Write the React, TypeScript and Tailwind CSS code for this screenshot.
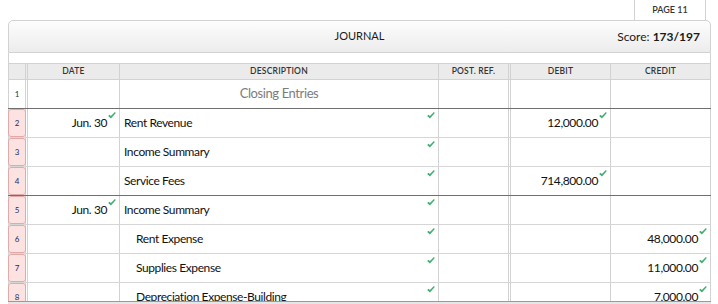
import React from 'react'

type Row = {
  n: number
  date?: string
  desc: string
  indent?: boolean
  debit?: string
  credit?: string
  checks: boolean
  title?: boolean
  dark?: boolean
}

const ROWS: Row[] = [
  { n: 1, desc: 'Closing Entries', title: true, checks: false, dark: true },
  { n: 2, date: 'Jun. 30', desc: 'Rent Revenue', debit: '12,000.00', checks: true },
  { n: 3, desc: 'Income Summary', checks: true },
  { n: 4, desc: 'Service Fees', debit: '714,800.00', checks: true, dark: true },
  { n: 5, date: 'Jun. 30', desc: 'Income Summary', checks: true },
  { n: 6, desc: 'Rent Expense', indent: true, credit: '48,000.00', checks: true },
  { n: 7, desc: 'Supplies Expense', indent: true, credit: '11,000.00', checks: true },
  { n: 8, desc: 'Depreciation Expense-Building', indent: true, credit: '7,000.00', checks: true },
]

const COLS = 'grid grid-cols-[17px_95px_319px_69px_103px_100px]'

function Check() {
  return (
    <svg width="8" height="7" viewBox="0 0 8 7" className="absolute top-[3px] right-[3px]">
      <path d="M0.2 3.9 L1.5 2.8 L2.9 4.1 L6.9 0.1 L7.8 0.9 L2.9 6.4 Z" fill="#3fae72" />
    </svg>
  )
}

function NumCell({ value, check }: { value?: string; check: boolean }) {
  return (
    <div className="relative flex items-center justify-end pr-[12px] text-[12px] tracking-[-0.4px] text-[#111]">
      {value}
      {value && check && <Check />}
    </div>
  )
}

export default function App() {
  return (
    <div className="w-[718px] h-[304px] bg-white overflow-hidden font-['Lato','Liberation_Sans',sans-serif] text-[#222]">
      {/* Page tab */}
      <div className="flex justify-end pr-[12px] h-[20px]">
        <div className="w-[72px] border-x border-[#d2d2d2] bg-white flex items-center justify-center text-[9px] font-semibold text-[#333]">
          PAGE 11
        </div>
      </div>

      {/* Header bar */}
      <div className="ml-[8px] w-[703px] h-[33px] border border-[#d2d2d2] rounded-t-[5px] bg-gradient-to-b from-[#fdfdfd] to-[#ececec] relative flex items-center justify-center">
        <span className="text-[11px] text-[#1a1a1a]">JOURNAL</span>
        <span className="absolute right-[10px] text-[12px] text-[#1a1a1a]">
          Score: <span className="font-bold">173/197</span>
        </span>
      </div>

      {/* Spacer strip */}
      <div className="ml-[8px] w-[703px] h-[10px] border-x border-[#d2d2d2] bg-white" />

      {/* Column headers */}
      <div className={`${COLS} ml-[8px] w-[703px] h-[17px] border-y border-[#d2d2d2] bg-[#ebebeb] text-[8.5px] font-semibold text-[#333] tracking-[0.2px]`}>
        <div className="border-l border-[#d2d2d2]" />
        <div className="border-l-[3px] border-double border-r border-[#d2d2d2] flex items-center justify-center">DATE</div>
        <div className="border-r border-[#d2d2d2] flex items-center justify-center">DESCRIPTION</div>
        <div className="flex items-center justify-center">POST. REF.</div>
        <div className="border-l-[3px] border-double border-r border-[#d2d2d2] flex items-center justify-center">DEBIT</div>
        <div className="border-r border-[#d2d2d2] flex items-center justify-center">CREDIT</div>
      </div>

      {/* Body */}
      <div className="ml-[8px] w-[703px] h-[221px] overflow-hidden">
        {ROWS.map((r) => (
          <div
            key={r.n}
            className={`${COLS} h-[29px] border-b ${r.dark ? 'border-[#6f6f6f]' : 'border-[#d6d6d6]'}`}
          >
            <div className="border-l border-[#d2d2d2]">
              {r.n === 1 ? (
                <div className="h-full flex items-center justify-center text-[8px] text-[#333]">1</div>
              ) : (
                <div className="relative z-10 -ml-px w-[18px] h-full rounded-[3px] border border-[#e2a9a9] bg-[#fde2e2] flex items-center justify-center text-[8px] text-[#2b2b55]">
                  {r.n}
                </div>
              )}
            </div>
            <div className="relative border-l-[3px] border-double border-r border-[#d2d2d2] flex items-center justify-end pr-[12px] text-[12px] tracking-[-0.4px] text-[#111]">
              {r.date}
              {r.date && <Check />}
            </div>
            <div
              className={`relative border-r border-[#d2d2d2] flex items-center text-[12px] tracking-[-0.4px] ${
                r.title ? 'justify-center text-[13px] text-[#7c7c7c]' : r.indent ? 'pl-[16px] text-[#111]' : 'pl-[4px] text-[#111]'
              }`}
            >
              {r.desc}
              {r.checks && <Check />}
            </div>
            <div />
            <div className="border-l-[3px] border-double border-r border-[#d2d2d2] grid">
              <NumCell value={r.debit} check={r.checks} />
            </div>
            <div className="border-r border-[#d2d2d2] grid">
              <NumCell value={r.credit} check={r.checks} />
            </div>
          </div>
        ))}
      </div>

      <div className="ml-[8px] w-[703px] h-px bg-[#9a9a9a]" />
      <div className="ml-[8px] w-[703px] h-[2px] bg-[#e6e6e6]" />
    </div>
  )
}
